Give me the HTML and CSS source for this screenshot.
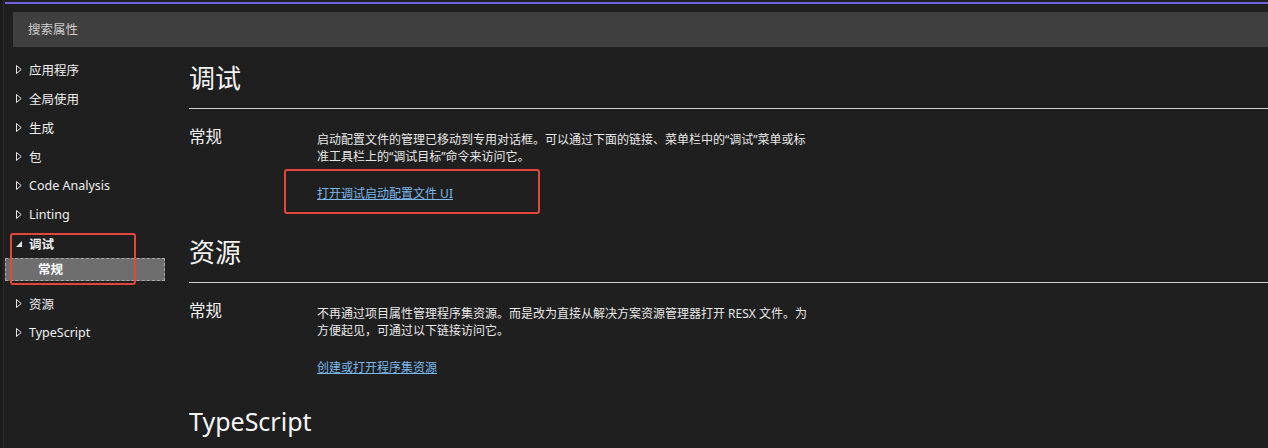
FILE: index.html
```html
<!DOCTYPE html>
<html lang="zh-CN">
<head>
<meta charset="utf-8">
<title>属性</title>
<link rel="stylesheet" href="styles.css">
</head>
<body>
<div class="app">
  <div class="accent"></div>
  <div class="search">搜索属性</div>
  <div class="layout">
    <nav class="sidebar">
      <div class="item"><svg class="tri" width="6" height="9" viewBox="0 0 6 9"><path d="M0.5 0.5 L5.2 4.5 L0.5 8.5 Z" fill="none" stroke="#e6e6e6" stroke-width="1"/></svg><span>应用程序</span></div>
      <div class="item"><svg class="tri" width="6" height="9" viewBox="0 0 6 9"><path d="M0.5 0.5 L5.2 4.5 L0.5 8.5 Z" fill="none" stroke="#e6e6e6" stroke-width="1"/></svg><span>全局使用</span></div>
      <div class="item"><svg class="tri" width="6" height="9" viewBox="0 0 6 9"><path d="M0.5 0.5 L5.2 4.5 L0.5 8.5 Z" fill="none" stroke="#e6e6e6" stroke-width="1"/></svg><span>生成</span></div>
      <div class="item"><svg class="tri" width="6" height="9" viewBox="0 0 6 9"><path d="M0.5 0.5 L5.2 4.5 L0.5 8.5 Z" fill="none" stroke="#e6e6e6" stroke-width="1"/></svg><span>包</span></div>
      <div class="item"><svg class="tri" width="6" height="9" viewBox="0 0 6 9"><path d="M0.5 0.5 L5.2 4.5 L0.5 8.5 Z" fill="none" stroke="#e6e6e6" stroke-width="1"/></svg><span>Code Analysis</span></div>
      <div class="item"><svg class="tri" width="6" height="9" viewBox="0 0 6 9"><path d="M0.5 0.5 L5.2 4.5 L0.5 8.5 Z" fill="none" stroke="#e6e6e6" stroke-width="1"/></svg><span>Linting</span></div>
      <div class="group">
        <div class="item expanded"><svg class="tri" width="6" height="9" viewBox="0 0 6 9"><path d="M6 2 L6 8 L0 8 Z" fill="#e6e6e6"/></svg><span>调试</span></div>
        <div class="child selected">常规</div>
        <div class="mark mark-nav"></div>
      </div>
      <div class="item"><svg class="tri" width="6" height="9" viewBox="0 0 6 9"><path d="M0.5 0.5 L5.2 4.5 L0.5 8.5 Z" fill="none" stroke="#e6e6e6" stroke-width="1"/></svg><span>资源</span></div>
      <div class="item"><svg class="tri" width="6" height="9" viewBox="0 0 6 9"><path d="M0.5 0.5 L5.2 4.5 L0.5 8.5 Z" fill="none" stroke="#e6e6e6" stroke-width="1"/></svg><span>TypeScript</span></div>
    </nav>
    <main class="main">
      <section class="section sec-debug">
        <h1 class="heading">调试</h1>
        <div class="row">
          <div class="label">常规</div>
          <div class="body">
            <p class="desc">启动配置文件的管理已移动到专用对话框。可以通过下面的链接、菜单栏中的“调试”菜单或标<br>准工具栏上的“调试目标”命令来访问它。</p>
            <div class="linkwrap"><a class="link" href="#">打开调试启动配置文件 UI</a><div class="mark mark-link"></div></div>
          </div>
        </div>
      </section>
      <section class="section sec-res">
        <h1 class="heading">资源</h1>
        <div class="row">
          <div class="label">常规</div>
          <div class="body">
            <p class="desc">不再通过项目属性管理程序集资源。而是改为直接从解决方案资源管理器打开 RESX 文件。为<br>方便起见，可通过以下链接访问它。</p>
            <div class="linkwrap"><a class="link" href="#">创建或打开程序集资源</a></div>
          </div>
        </div>
      </section>
      <section class="section">
        <h1 class="heading heading-latin">TypeScript</h1>
      </section>
    </main>
  </div>
</div>
</body>
</html>
```
FILE: styles.css
```css
* { box-sizing: border-box; }
html, body { margin: 0; padding: 0; }
body {
  background: #1b1b1b;
  font-family: "Noto Sans", "Noto Sans CJK SC", sans-serif;
  color: #f0f0f0;
  overflow: hidden;
  height: 448px;
}
.app {
  margin-left: 3px;
  border-left: 1px solid #2c2c2c;
  background: #1f1f1f;
  height: 448px;
  padding-top: 2px;
  overflow: hidden;
}
.accent {
  margin-left: 1px;
  height: 2px;
  background: #7062e0;
}
.search {
  margin: 8px 0 0 9px;
  height: 35px;
  background: #3f3f3f;
  color: #cfcfcf;
  font-size: 12.5px;
  line-height: 35px;
  padding-left: 15px;
}
.layout {
  display: flex;
}
.sidebar {
  width: 166px;
  flex: none;
  padding-top: 8px;
}
.item {
  height: 29px;
  display: flex;
  align-items: center;
  padding-left: 12px;
  font-size: 12.5px;
  color: #f0f0f0;
}
.tri { flex: none; margin-right: 7px; }
.expanded span { font-weight: 700; }
.group { position: relative; padding-bottom: 8px; }
.child {
  height: 23px;
  margin-left: 1px;
  width: 160px;
  font-size: 12.5px;
  font-weight: 700;
  line-height: 21px;
  padding-left: 32px;
}
.selected {
  background: #6e6e6e;
  border: 1px dashed #a8a8a8;
  color: #ffffff;
}
.mark {
  position: absolute;
  border: 2px solid #e5463c;
  border-radius: 3px;
  pointer-events: none;
}
.mark-nav { left: 6px; top: 4px; width: 126px; height: 52px; }
.main {
  flex: 1;
  padding-left: 19px;
  padding-top: 15px;
}
.section { margin-bottom: 35px; }
.sec-debug { margin-bottom: 38px; }
.sec-res { margin-bottom: 33px; }
.heading {
  margin: 0;
  font-size: 26px;
  font-weight: 400;
  line-height: 32px;
  padding-bottom: 14px;
  border-bottom: 1px solid #cfcfcf;
  color: #f4f4f4;
}
.heading-latin { font-size: 25px; }
.section:last-child .heading { border-bottom: none; }
.row {
  display: flex;
  margin-top: 17px;
}
.label {
  width: 128px;
  flex: none;
  font-size: 16.5px;
  line-height: 22px;
  color: #f0f0f0;
}
.body { padding-top: 5px; }
.desc {
  margin: 0;
  font-size: 12px;
  line-height: 17px;
  color: #e8e8e8;
  white-space: nowrap;
}
.linkwrap {
  position: relative;
  margin-top: 16px;
  height: 17px;
}
.link {
  font-size: 12px;
  line-height: 17px;
  color: #7ab8ec;
  text-decoration: underline;
}
.mark-link { left: -33px; top: -12px; width: 256px; height: 45px; }
```
